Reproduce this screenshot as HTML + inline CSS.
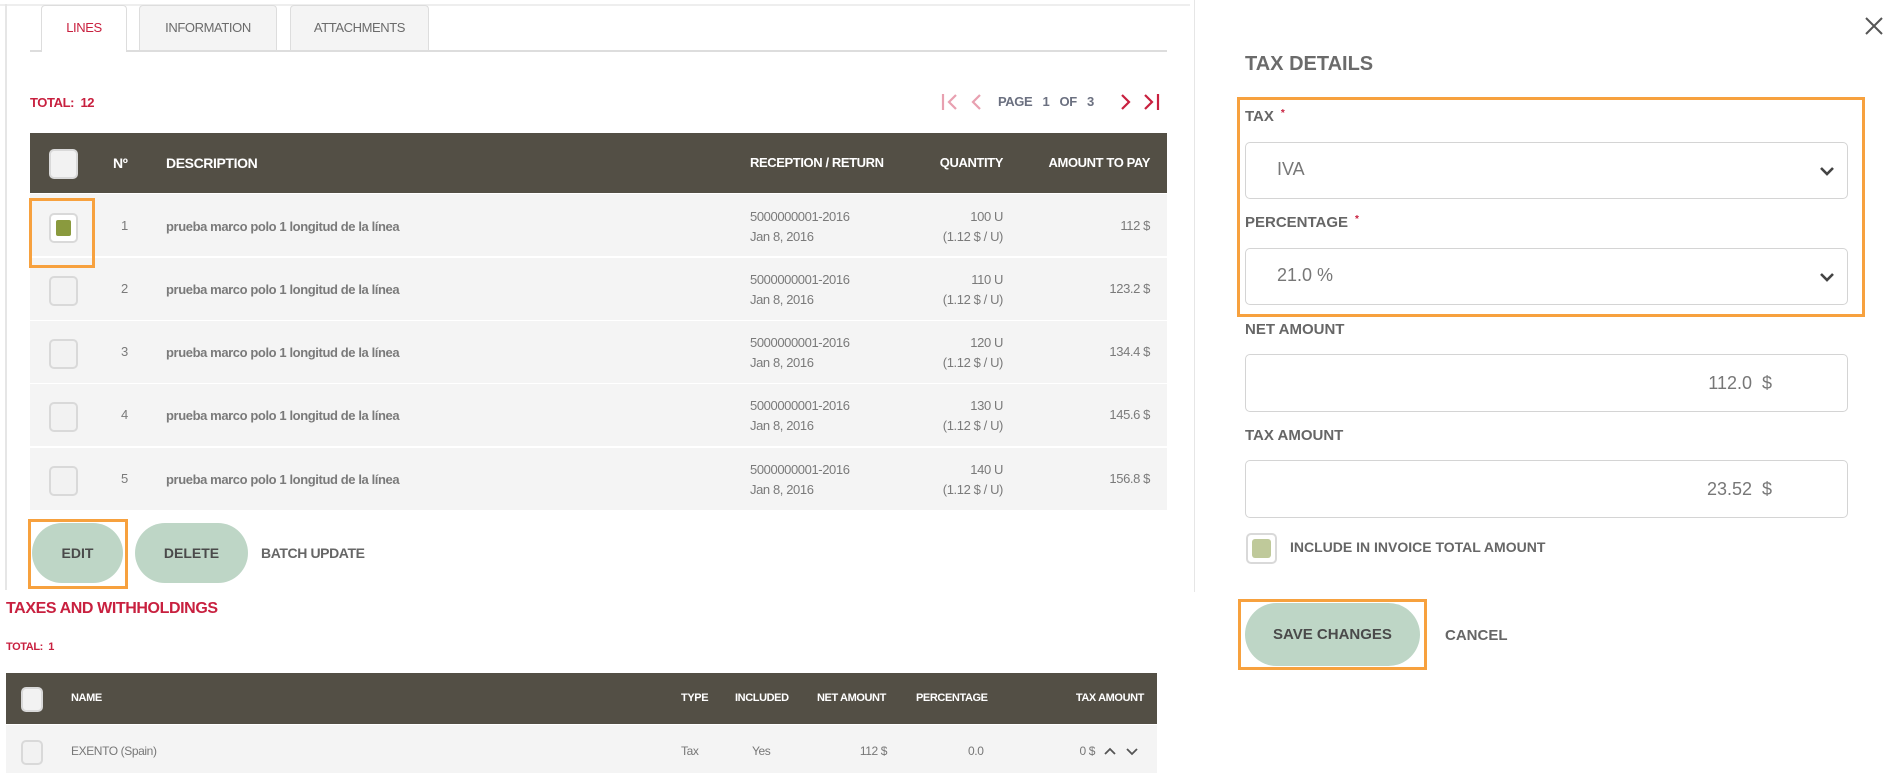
<!DOCTYPE html>
<html><head><meta charset="utf-8"><style>
*{margin:0;padding:0;box-sizing:border-box}
body{width:1897px;height:773px;background:#fff;position:relative;overflow:hidden;font-family:"Liberation Sans Narrow","Liberation Sans",sans-serif;color:#6b6b6b}
.a{position:absolute;white-space:nowrap}
.L .a{letter-spacing:-0.4px}
.b{font-weight:bold}
.red{color:#c8203f}
.hdr{background:#534f45;color:#fff;font-weight:bold}
.cb{position:absolute;width:29px;height:30px;border:2px solid #d9d9d9;border-radius:5px;background:#f2f2f2}
.row{position:absolute;left:30px;width:1137px;height:62px;background:#f4f4f4}
.t{font-size:13px;color:#7a7a7a}
.or{position:absolute;border:3px solid #f7a13e}
.pill{position:absolute;background:#bed6c6;border-radius:32px;color:#4a4a4a;font-weight:bold;font-size:14px;display:flex;align-items:center;justify-content:center}
.inp{position:absolute;left:1245px;width:603px;border:1.5px solid #d4d4d4;border-radius:5px;background:#fff}
.lbl{font-family:"Liberation Sans",sans-serif;font-weight:bold;font-size:15px;color:#666}
.r{font-family:"Liberation Sans",sans-serif}
</style></head><body>
<div class="L">
<div class="a" style="left:0;top:4px;width:1190px;height:2px;background:#eee"></div>
<div class="a" style="left:5px;top:4px;width:2px;height:586px;background:#e6e6e6"></div>
<div class="a" style="left:30px;top:50px;width:1137px;height:2px;background:#ddd"></div>
<div class="a" style="left:41px;top:5px;width:86px;height:47px;background:#fff;border:1px solid #ddd;border-bottom:none;border-radius:4px 4px 0 0"></div>
<div class="a" style="left:139px;top:5px;width:138px;height:45px;background:#f4f4f4;border:1px solid #ddd;border-bottom:none;border-radius:4px 4px 0 0"></div>
<div class="a" style="left:290px;top:5px;width:139px;height:45px;background:#f4f4f4;border:1px solid #ddd;border-bottom:none;border-radius:4px 4px 0 0"></div>
<div class="a red" style="left:41px;width:86px;top:20px;text-align:center;font-size:13px">LINES</div>
<div class="a" style="left:139px;width:138px;top:20px;text-align:center;font-size:13px">INFORMATION</div>
<div class="a" style="left:290px;width:139px;top:20px;text-align:center;font-size:13px">ATTACHMENTS</div>
<div class="a red b" style="left:30px;top:95px;font-size:13px">TOTAL:&nbsp; 12</div>
<svg class="a" style="left:940px;top:93px" width="222" height="18" viewBox="0 0 222 18" fill="none" stroke-width="2.2">
<path d="M3 1v16M16 2l-7 7 7 7" stroke="#e8a0b0"/><path d="M40 2l-7 7 7 7" stroke="#e8a0b0"/>
<path d="M182 2l7 7-7 7" stroke="#c8203f"/><path d="M205 2l7 7-7 7M218 1v16" stroke="#c8203f"/></svg>
<div class="a b" style="left:998px;top:94px;font-size:13px;color:#6b7080;word-spacing:7px">PAGE 1 OF 3</div>
<div class="a hdr" style="left:30px;top:133px;width:1137px;height:60px"></div>
<div class="cb" style="left:49px;top:149px"></div>
<div class="a b" style="left:113px;top:155px;color:#fff;font-size:14px">Nº</div>
<div class="a b" style="left:166px;top:155px;color:#fff;font-size:14px">DESCRIPTION</div>
<div class="a b" style="left:750px;top:155px;color:#fff;font-size:13px">RECEPTION / RETURN</div>
<div class="a b" style="left:930px;width:73px;text-align:right;top:155px;color:#fff;font-size:13px">QUANTITY</div>
<div class="a b" style="left:1030px;width:120px;text-align:right;top:155px;color:#fff;font-size:13px">AMOUNT TO PAY</div>
<div class="row" style="top:194px"></div><div class="row" style="top:258px"></div><div class="row" style="top:321px"></div><div class="row" style="top:384px"></div><div class="row" style="top:448px"></div>
<div class="cb" style="left:49px;top:213px;background:#fff"><div style="position:absolute;left:5px;top:5px;width:15px;height:16px;background:#8a9a3e;border-radius:2px"></div></div>
<div class="cb" style="left:49px;top:276px"></div><div class="cb" style="left:49px;top:339px"></div><div class="cb" style="left:49px;top:402px"></div><div class="cb" style="left:49px;top:466px"></div>
<div class="or" style="left:29px;top:198px;width:66px;height:70px"></div>
<div class="a t" style="left:121px;top:218px">1</div><div class="a t" style="left:121px;top:281px">2</div><div class="a t" style="left:121px;top:344px">3</div><div class="a t" style="left:121px;top:407px">4</div><div class="a t" style="left:121px;top:471px">5</div>
<div class="a t b" style="left:166px;top:219px">prueba marco polo 1 longitud de la línea</div>
<div class="a t b" style="left:166px;top:282px">prueba marco polo 1 longitud de la línea</div>
<div class="a t b" style="left:166px;top:345px">prueba marco polo 1 longitud de la línea</div>
<div class="a t b" style="left:166px;top:408px">prueba marco polo 1 longitud de la línea</div>
<div class="a t b" style="left:166px;top:472px">prueba marco polo 1 longitud de la línea</div>
<div class="a t" style="left:750px;top:207px;line-height:20px">5000000001-2016<br>Jan 8, 2016</div>
<div class="a t" style="left:750px;top:270px;line-height:20px">5000000001-2016<br>Jan 8, 2016</div>
<div class="a t" style="left:750px;top:333px;line-height:20px">5000000001-2016<br>Jan 8, 2016</div>
<div class="a t" style="left:750px;top:396px;line-height:20px">5000000001-2016<br>Jan 8, 2016</div>
<div class="a t" style="left:750px;top:460px;line-height:20px">5000000001-2016<br>Jan 8, 2016</div>
<div class="a t" style="left:900px;width:103px;text-align:right;top:207px;line-height:20px">100 U<br>(1.12 $ / U)</div>
<div class="a t" style="left:900px;width:103px;text-align:right;top:270px;line-height:20px">110 U<br>(1.12 $ / U)</div>
<div class="a t" style="left:900px;width:103px;text-align:right;top:333px;line-height:20px">120 U<br>(1.12 $ / U)</div>
<div class="a t" style="left:900px;width:103px;text-align:right;top:396px;line-height:20px">130 U<br>(1.12 $ / U)</div>
<div class="a t" style="left:900px;width:103px;text-align:right;top:460px;line-height:20px">140 U<br>(1.12 $ / U)</div>
<div class="a t" style="left:1050px;width:100px;text-align:right;top:218px">112 $</div>
<div class="a t" style="left:1050px;width:100px;text-align:right;top:281px">123.2 $</div>
<div class="a t" style="left:1050px;width:100px;text-align:right;top:344px">134.4 $</div>
<div class="a t" style="left:1050px;width:100px;text-align:right;top:407px">145.6 $</div>
<div class="a t" style="left:1050px;width:100px;text-align:right;top:471px">156.8 $</div>
<div class="pill" style="left:32px;top:523px;width:91px;height:60px">EDIT</div>
<div class="or" style="left:28px;top:519px;width:100px;height:70px"></div>
<div class="pill" style="left:135px;top:523px;width:113px;height:60px">DELETE</div>
<div class="a b" style="left:261px;top:545px;font-size:14px;color:#666">BATCH UPDATE</div>
<div class="a red b" style="left:6px;top:600px;font-size:16px">TAXES AND WITHHOLDINGS</div>
<div class="a red b" style="left:6px;top:641px;font-size:11px">TOTAL:&nbsp; 1</div>
<div class="a hdr" style="left:6px;top:673px;width:1151px;height:51px"></div>
<div class="cb" style="left:21px;top:687px;width:22px;height:25px"></div>
<div class="a b" style="left:71px;top:692px;color:#fff;font-size:11px">NAME</div>
<div class="a b" style="left:681px;top:692px;color:#fff;font-size:11px">TYPE</div>
<div class="a b" style="left:735px;top:692px;color:#fff;font-size:11px">INCLUDED</div>
<div class="a b" style="left:817px;top:692px;color:#fff;font-size:11px">NET AMOUNT</div>
<div class="a b" style="left:916px;top:692px;color:#fff;font-size:11px">PERCENTAGE</div>
<div class="a b" style="left:1060px;width:84px;text-align:right;top:692px;color:#fff;font-size:11px">TAX AMOUNT</div>
<div class="a" style="left:6px;top:725px;width:1151px;height:48px;background:#f4f4f4"></div>
<div class="cb" style="left:21px;top:740px;width:22px;height:25px"></div>
<div class="a" style="left:71px;top:744px;font-size:12px;color:#777">EXENTO (Spain)</div>
<div class="a" style="left:681px;top:744px;font-size:12px;color:#777">Tax</div>
<div class="a" style="left:752px;top:744px;font-size:12px;color:#777">Yes</div>
<div class="a" style="left:840px;width:47px;text-align:right;top:744px;font-size:12px;color:#777">112 $</div>
<div class="a" style="left:968px;top:744px;font-size:12px;color:#777">0.0</div>
<div class="a" style="left:1075px;width:20px;text-align:right;top:744px;font-size:12px;color:#777">0 $</div>
<svg class="a" style="left:1103px;top:745px" width="40" height="12" fill="none" stroke="#555" stroke-width="1.8"><path d="M2 9l5-5 5 5M24 4l5 5 5-5"/></svg>
</div>
<div class="a" style="left:1194px;top:0;width:1px;height:592px;background:#e6e6e6"></div>
<svg class="a" style="left:1865px;top:17px" width="18" height="18" stroke="#555" stroke-width="2"><path d="M1 1l16 16M17 1L1 17"/></svg>
<div class="a r b" style="left:1245px;top:53px;font-size:20px;color:#6b6b6b">TAX DETAILS</div>
<div class="a lbl" style="left:1245px;top:108px">TAX <span style="color:#c8203f;font-size:10px;vertical-align:top">&nbsp;*</span></div>
<div class="inp" style="top:142px;height:57px"></div>
<div class="a r" style="left:1277px;top:159px;font-size:18px;color:#777">IVA</div>
<svg class="a" style="left:1819px;top:166px" width="16" height="10" fill="none" stroke="#444" stroke-width="2.6"><path d="M2 2l6 6 6-6"/></svg>
<div class="a lbl" style="left:1245px;top:214px">PERCENTAGE <span style="color:#c8203f;font-size:10px;vertical-align:top">&nbsp;*</span></div>
<div class="inp" style="top:248px;height:57px"></div>
<div class="a r" style="left:1277px;top:265px;font-size:18px;color:#777">21.0 %</div>
<svg class="a" style="left:1819px;top:272px" width="16" height="10" fill="none" stroke="#444" stroke-width="2.6"><path d="M2 2l6 6 6-6"/></svg>
<div class="or" style="left:1237px;top:97px;width:628px;height:220px"></div>
<div class="a lbl" style="left:1245px;top:321px">NET AMOUNT</div>
<div class="inp" style="top:354px;height:58px"></div>
<div class="a r" style="left:1672px;width:100px;text-align:right;top:373px;font-size:18px;color:#777">112.0 &nbsp;$</div>
<div class="a lbl" style="left:1245px;top:427px">TAX AMOUNT</div>
<div class="inp" style="top:460px;height:58px"></div>
<div class="a r" style="left:1672px;width:100px;text-align:right;top:479px;font-size:18px;color:#777">23.52 &nbsp;$</div>
<div class="cb" style="left:1246px;top:533px;width:31px;height:31px;background:#fff"><div style="position:absolute;left:4px;top:4px;width:19px;height:19px;background:#bfc99a;border-radius:3px"></div></div>
<div class="a lbl" style="left:1290px;top:539px;font-size:14px">INCLUDE IN INVOICE TOTAL AMOUNT</div>
<div class="pill r" style="left:1245px;top:603px;width:175px;height:63px;font-size:15px">SAVE CHANGES</div>
<div class="or" style="left:1238px;top:599px;width:189px;height:71px"></div>
<div class="a lbl" style="left:1445px;top:627px">CANCEL</div>
</body></html>
